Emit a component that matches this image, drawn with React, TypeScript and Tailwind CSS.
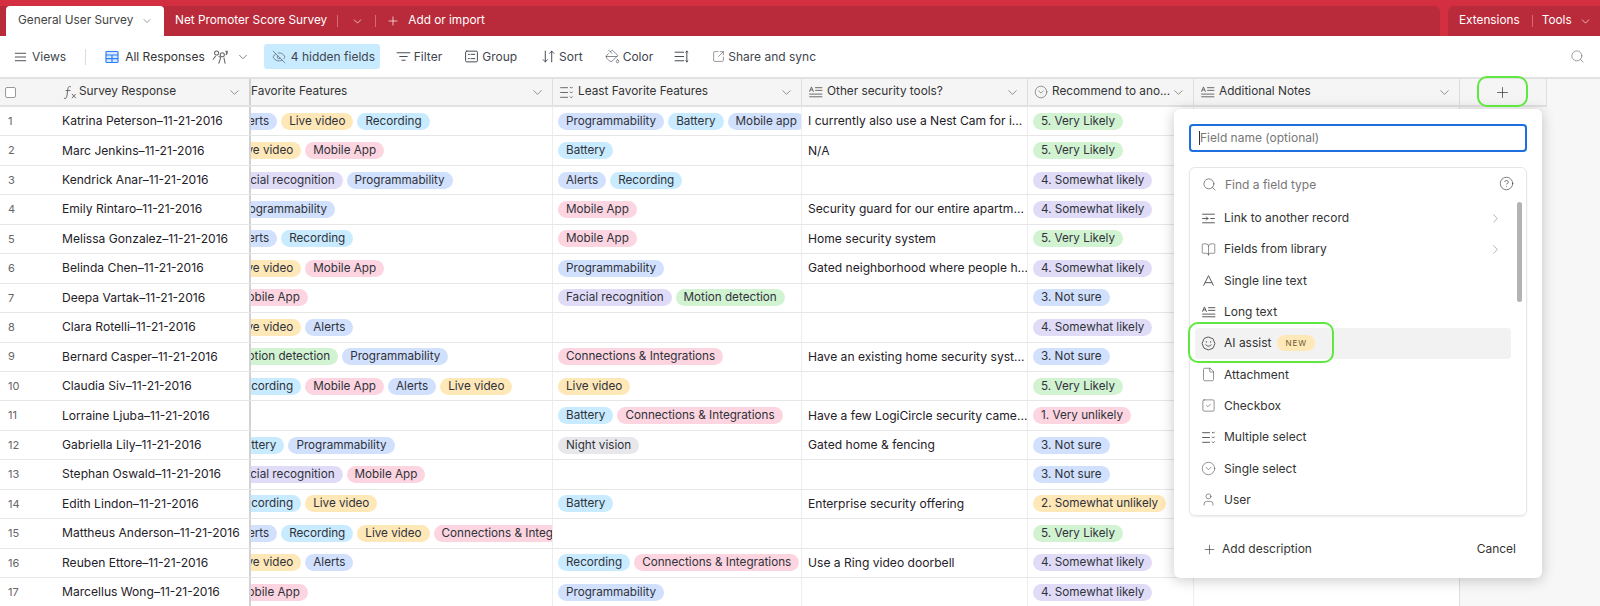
import React from "react";
import { ChevronDown, ChevronRight, Plus, Search, CircleHelp, User, BookOpen, File, SquareCheck, CircleChevronDown, EyeOff, PaintBucket, SquareArrowOutUpRight } from "lucide-react";

type P = { className?: string };
const Svg = ({ className, children, s = 15 }: P & { children: React.ReactNode; s?: number }) => (
  <svg width={s} height={s} viewBox="0 0 14 14" fill="none" stroke="currentColor" strokeWidth={0.9} strokeLinecap="round" strokeLinejoin="round" className={"shrink-0 " + (className ?? "")}>{children}</svg>
);
const LongText = ({ className }: P) => (
  <Svg className={className}>
    <path d="M1.5 6 L3.2 1.8 L5 6 M2.2 4.6 H4.3 M7 2.5 H13 M7 5 H13 M1.5 8.5 H13 M1.5 11 H13" />
  </Svg>
);
const MultiSel = ({ className }: P) => (
  <Svg className={className}>
    <path d="M1.5 2.5 H8 M1.5 7 H8 M1.5 11.5 H8 M10.5 2 L11.5 3 L12.5 2 M10.5 6.5 L11.5 7.5 L12.5 6.5 M10.5 11 L11.5 12 L12.5 11" />
  </Svg>
);
const Fx = ({ className }: P) => (
  <Svg className={className}>
    <path d="M7 1.5 C5.4 1 4.8 2 4.6 3.5 L3.6 10.5 C3.4 12.2 2.6 13 1.2 12.4 M2.8 5.2 H6.6 M8.6 8.6 L11.6 12 M11.6 8.6 L8.6 12" />
  </Svg>
);
const LinkIcon = ({ className }: P) => (
  <Svg className={className}>
    <path d="M1.5 3 H12.5 M1.5 11 H12.5 M1.5 7 H6.5 M5 5.5 L6.5 7 L5 8.5 M9 7 H12.5" />
  </Svg>
);
const TextA = ({ className }: P) => (
  <Svg className={className}><path d="M2.5 11.5 L7 2.5 L11.5 11.5 M4 9 H10" /></Svg>
);
const Bot = ({ className }: P) => (
  <Svg className={className}>
    <path d="M7 1 L11.2 2.6 L13 7 L11.2 11.4 L7 13 L2.8 11.4 L1 7 L2.8 2.6 Z" />
    <path d="M4.5 8.2 C5.5 10 8.5 10 9.5 8.2" />
    <path d="M5 5.2 V5.8 M9 5.2 V5.8" />
  </Svg>
);
const FilterIc = ({ className }: P) => (
  <Svg className={className}><path d="M1 3.5 H13 M3.5 7 H10.5 M5.5 10.5 H8.5" /></Svg>
);
const GroupIc = ({ className }: P) => (
  <Svg className={className}><rect x="1.5" y="2" width="11" height="10" rx="1" /><path d="M4 5 H5 M6.5 5 H10 M4 9 H5 M6.5 9 H10" /></Svg>
);
const SortIc = ({ className }: P) => (
  <Svg className={className}><path d="M4 2 V12 M2 10 L4 12 L6 10 M10 12 V2 M8 4 L10 2 L12 4" /></Svg>
);
const RowH = ({ className }: P) => (
  <Svg className={className}><path d="M1 3 H9 M1 7 H9 M1 11 H9 M12 2 V12 M11 3 L12 2 L13 3 M11 11 L12 12 L13 11" /></Svg>
);
const People = ({ className }: P) => (
  <Svg className={className} s={16}>
    <circle cx="4" cy="3.5" r="1.8" /><circle cx="9" cy="5" r="1.8" />
    <path d="M1 9 L3 6.5 M6 6.5 L7.5 7.5 M6 12.5 L7.5 8 M11.5 12.5 L10.5 8 M12 2 H13.5 L12.5 3.5 H13.6 L12.2 5" />
  </Svg>
);

const c = {
  blue: "bg-[#d0e0fd]",
  cyan: "bg-[#c8ebff]",
  yellow: "bg-[#ffe8b8]",
  pink: "bg-[#fcd5e0]",
  purple: "bg-[#e0dcf8]",
  green: "bg-[#d2f3d2]",
  gray: "bg-[#e8e8ec]",
};
const tagColor: Record<string, string> = {
  Alerts: c.blue,
  "Live video": c.yellow,
  Recording: c.cyan,
  "Mobile App": c.pink,
  "Mobile app": c.blue,
  "Facial recognition": c.purple,
  Programmability: c.blue,
  "Motion detection": c.green,
  Battery: c.cyan,
  "Connections & Integrations": c.pink,
  "Night vision": c.gray,
  "5. Very Likely": c.green,
  "4. Somewhat likely": c.purple,
  "3. Not sure": c.blue,
  "2. Somewhat unlikely": c.yellow,
  "1. Very unlikely": c.pink,
};

const rows: [string, string[], string[], string, string][] = [
  ["Katrina Peterson", ["Alerts", "Live video", "Recording"], ["Programmability", "Battery", "Mobile app"], "I currently also use a Nest Cam for i...", "5. Very Likely"],
  ["Marc Jenkins", ["Live video", "Mobile App"], ["Battery"], "N/A", "5. Very Likely"],
  ["Kendrick Anar", ["Facial recognition", "Programmability"], ["Alerts", "Recording"], "", "4. Somewhat likely"],
  ["Emily Rintaro", ["Programmability"], ["Mobile App"], "Security guard for our entire apartm...", "4. Somewhat likely"],
  ["Melissa Gonzalez", ["Alerts", "Recording"], ["Mobile App"], "Home security system", "5. Very Likely"],
  ["Belinda Chen", ["Live video", "Mobile App"], ["Programmability"], "Gated neighborhood where people h...", "4. Somewhat likely"],
  ["Deepa Vartak", ["Mobile App"], ["Facial recognition", "Motion detection"], "", "3. Not sure"],
  ["Clara Rotelli", ["Live video", "Alerts"], [], "", "4. Somewhat likely"],
  ["Bernard Casper", ["Motion detection", "Programmability"], ["Connections & Integrations"], "Have an existing home security syst...", "3. Not sure"],
  ["Claudia Siv", ["Recording", "Mobile App", "Alerts", "Live video"], ["Live video"], "", "5. Very Likely"],
  ["Lorraine Ljuba", [], ["Battery", "Connections & Integrations"], "Have a few LogiCircle security came...", "1. Very unlikely"],
  ["Gabriella Lily", ["Battery", "Programmability"], ["Night vision"], "Gated home & fencing", "3. Not sure"],
  ["Stephan Oswald", ["Facial recognition", "Mobile App"], [], "", "3. Not sure"],
  ["Edith Lindon", ["Recording", "Live video"], ["Battery"], "Enterprise security offering", "2. Somewhat unlikely"],
  ["Mattheus Anderson", ["Alerts", "Recording", "Live video", "Connections & Integrations"], [], "", "5. Very Likely"],
  ["Reuben Ettore", ["Live video", "Alerts"], ["Recording", "Connections & Integrations"], "Use a Ring video doorbell", "4. Somewhat likely"],
  ["Marcellus Wong", ["Mobile App"], ["Programmability"], "", "4. Somewhat likely"],
];

const Tag = ({ t }: { t: string }) => (
  <span className={"shrink-0 h-[17px] px-[8px] rounded-full flex items-center text-[11.7px] leading-[17px] text-[#30323a] whitespace-nowrap " + tagColor[t]}>{t}</span>
);

const HeaderCell = ({ w, icon, label }: { w: string; icon?: React.ReactNode; label: string }) => (
  <div className={"shrink-0 h-full flex items-center border-r border-[#dedede] text-[11.8px] text-[#333] overflow-hidden " + w}>
    <div className="flex items-center gap-[4px] flex-1 min-w-0 pl-[6px]">
      {icon}
      <span className="whitespace-nowrap">{label}</span>
    </div>
    <ChevronDown size={15} strokeWidth={1} className="shrink-0 text-[#555] mr-[7px]" />
  </div>
);

const ToolBtn = ({ icon, label, className }: { icon: React.ReactNode; label?: string; className?: string }) => (
  <div className={"flex items-center gap-[3px] text-[12px] text-[#41454d] " + (className ?? "")}>
    {icon}
    {label && <span className="whitespace-nowrap">{label}</span>}
  </div>
);

const FieldRow = ({ icon, label, arrow, active, badge }: { icon: React.ReactNode; label: string; arrow?: boolean; active?: boolean; badge?: boolean }) => (
  <div className={"h-[31.3px] shrink-0 flex items-center pl-[6px] pr-[8px] rounded-[4px] text-[12px] text-[#333] " + (active ? "bg-[#f2f2f2]" : "")}>
    <span className="w-[15px] flex justify-center text-[#555] mr-[8px]">{icon}</span>
    <span>{label}</span>
    {badge && <span className="ml-[6px] h-[16px] px-[8px] rounded-full bg-[#ffe8b8] text-[#6b5a30] text-[8px] tracking-[1px] flex items-center">NEW</span>}
    {arrow && <ChevronRight size={15} strokeWidth={1} className="ml-auto text-[#888]" />}
  </div>
);

export default function App() {
  return (
    <div className="relative w-[1600px] h-[606px] overflow-hidden bg-white font-['Inter','Liberation_Sans',sans-serif]">
      {/* tab bar */}
      <div className="h-[36px] pt-[6px] bg-[#d32f41] flex gap-[8px]">
        <div className="flex-1 bg-[#b92a3a] rounded-tr-[6px] flex items-end text-[11.8px] text-white">
          <div className="ml-[6px] w-[158px] h-[30px] bg-white rounded-t-[4px] flex items-center pl-[12px] text-[#444]">
            <span className="whitespace-nowrap">General User Survey</span>
            <ChevronDown size={12} strokeWidth={1.2} className="ml-[8px] text-[#555]" />
          </div>
          <div className="h-[30px] flex items-center">
            <span className="ml-[11px] whitespace-nowrap">Net Promoter Score Survey</span>
            <div className="ml-[10px] w-px h-[12px] bg-[#d46a76]" />
            <ChevronDown size={13} strokeWidth={1.2} className="ml-[13px]" />
            <div className="ml-[11px] w-px h-[12px] bg-[#d46a76]" />
            <Plus size={14} strokeWidth={1.2} className="ml-[10px]" />
            <span className="ml-[8px] whitespace-nowrap">Add or import</span>
          </div>
        </div>
        <div className="w-[152px] bg-[#b92a3a] rounded-tl-[6px] flex items-center text-[11.8px] text-white pl-[11px]">
          <span>Extensions</span>
          <div className="ml-[12px] w-px h-[12px] bg-[#d46a76]" />
          <span className="ml-[9px]">Tools</span>
          <ChevronDown size={13} strokeWidth={1.2} className="ml-[7px]" />
        </div>
      </div>

      {/* toolbar */}
      <div className="h-[41px] flex items-center pl-[14px] pr-[15px] bg-white">
        <ToolBtn icon={<svg width="13" height="14" viewBox="0 0 14 14" fill="none" stroke="currentColor"><path d="M1 3 H13 M1 7 H13 M1 11 H13" /></svg>} label="Views" className="text-[#333] gap-[5px]" />
        <div className="ml-[19px] w-px h-[16px] bg-[#ddd]" />
        <svg width="14" height="14" viewBox="0 0 14 14" fill="none" stroke="#2d7ff9" strokeWidth="1.2" className="ml-[19px] shrink-0">
          <rect x="1" y="1.5" width="12" height="11" rx="1" fill="#d8e8ff" />
          <path d="M1 5 H13 M1 8.7 H13 M7 5 V12.5" />
        </svg>
        <span className="ml-[6px] text-[12px] text-[#333] whitespace-nowrap">All Responses</span>
        <People className="ml-[7px] text-[#666]" />
        <ChevronDown size={14} strokeWidth={1} className="ml-[8px] text-[#333]" />
        <div className="ml-[14px] h-[25px] w-[116px] shrink-0 rounded-[3px] bg-[#c8ebff] flex items-center pl-[8px] gap-[5px] text-[12px] text-[#41454d]">
          <EyeOff size={14} strokeWidth={1} />
          <span className="whitespace-nowrap">4 hidden fields</span>
        </div>
        <ToolBtn className="ml-[16px]" icon={<FilterIc />} label="Filter" />
        <ToolBtn className="ml-[22px]" icon={<GroupIc />} label="Group" />
        <ToolBtn className="ml-[24px]" icon={<SortIc />} label="Sort" />
        <ToolBtn className="ml-[22px]" icon={<PaintBucket size={15} strokeWidth={1} />} label="Color" />
        <ToolBtn className="ml-[21px]" icon={<RowH />} />
        <ToolBtn className="ml-[23px]" icon={<SquareArrowOutUpRight size={13} strokeWidth={1} />} label="Share and sync" />
        <Search size={15} strokeWidth={1} className="ml-auto text-[#666]" />
      </div>

      {/* table */}
      <div className="flex h-[529px] border-t-2 border-[#e2e2e2] bg-[#f7f7f7]">
        <div className="w-[1547px] shrink-0">
          {/* header */}
          <div className="h-[28px] border-b-2 border-[#e2e2e2] bg-[#f5f5f5] flex">
            <div className="w-[251px] shrink-0 flex items-center border-r-2 border-[#d2d2d2] pl-[5px] text-[11.8px] text-[#333] h-full">
              <div className="w-[11px] h-[11px] rounded-[2px] border border-[#999] bg-white mr-[47px]" />
              <Fx className="text-[#666] mr-[1px]" />
              <span className="flex-1 whitespace-nowrap">Survey Response</span>
              <ChevronDown size={15} strokeWidth={1} className="text-[#555] mr-[7px]" />
            </div>
            <HeaderCell w="w-[302px] -indent-[6px]" label="Favorite Features" />
            <HeaderCell w="w-[249px]" icon={<MultiSel className="text-[#666]" />} label="Least Favorite Features" />
            <HeaderCell w="w-[226px]" icon={<LongText className="text-[#666]" />} label="Other security tools?" />
            <HeaderCell w="w-[166px]" icon={<CircleChevronDown size={14} strokeWidth={1} className="text-[#555] shrink-0" />} label="Recommend to ano..." />
            <HeaderCell w="w-[266px]" icon={<LongText className="text-[#666]" />} label="Additional Notes" />
            <div className="w-[87px] shrink-0 h-full flex items-center justify-center border-r border-[#dedede]">
              <Plus size={17} strokeWidth={1} className="text-[#333] -ml-[2px]" />
            </div>
          </div>
          {/* rows */}
          {rows.map((r, i) => (
            <div key={i} className="h-[29.44px] flex bg-white text-[12.1px] text-[#1f2128] border-b border-[#e6e6e6] w-[1460px]">
              <div className="w-[251px] shrink-0 flex items-center border-r-2 border-[#d2d2d2]">
                <span className="w-[62px] shrink-0 pl-[8px] text-[11px] text-[#666]">{i + 1}</span>
                <span className="whitespace-nowrap">{r[0]}–11-21-2016</span>
              </div>
              <div className="w-[302px] shrink-0 overflow-hidden border-r border-[#eeeeee] flex items-center">
                <div className="flex gap-[4px] -ml-[22px]">
                  {r[1].map((t) => <Tag key={t} t={t} />)}
                </div>
              </div>
              <div className="w-[249px] shrink-0 overflow-hidden border-r border-[#eeeeee] flex items-center pl-[5px]">
                <div className="flex gap-[4px]">
                  {r[2].map((t) => <Tag key={t} t={t} />)}
                </div>
              </div>
              <div className="w-[226px] shrink-0 border-r border-[#eeeeee] flex items-center pl-[6px] overflow-hidden">
                <span className="whitespace-nowrap">{r[3]}</span>
              </div>
              <div className="w-[166px] shrink-0 border-r border-[#eeeeee] flex items-center pl-[5px]">
                <Tag t={r[4]} />
              </div>
              <div className="w-[266px] shrink-0 border-r border-[#dedede]" />
            </div>
          ))}
        </div>
      </div>

      {/* popover */}
      <div className="absolute left-[1174px] top-[109px] w-[368px] h-[469px] rounded-[6px] bg-white shadow-[0_2px_14px_rgba(0,0,0,0.22)] flex flex-col px-[15px] pt-[15px]">
        <div className="h-[28px] rounded-[4px] border-2 border-[#1d6fe0] flex items-center pl-[8px] text-[12px] text-[#777]">
          <span className="w-px h-[14px] bg-[#333]" />
          <span>Field name (optional)</span>
        </div>
        <div className="mt-[15px] h-[349px] rounded-[6px] border border-[#e6e6e6] shadow-[0_1px_2px_rgba(0,0,0,0.08)] pt-[3px] pl-[5px] pr-[15px] relative overflow-hidden flex flex-col">
          <div className="h-[27px] shrink-0 flex items-center pl-[7px] text-[12px] text-[#777]">
            <Search size={15} strokeWidth={1} className="text-[#444] mr-[8px]" />
            <span>Find a field type</span>
          </div>
          <div className="h-[4.5px] shrink-0" />
          <FieldRow icon={<LinkIcon />} label="Link to another record" arrow />
          <FieldRow icon={<BookOpen size={15} strokeWidth={1} />} label="Fields from library" arrow />
          <FieldRow icon={<TextA />} label="Single line text" />
          <FieldRow icon={<LongText />} label="Long text" />
          <FieldRow icon={<Bot />} label="AI assist" active badge />
          <FieldRow icon={<File size={15} strokeWidth={1} />} label="Attachment" />
          <FieldRow icon={<SquareCheck size={15} strokeWidth={1} />} label="Checkbox" />
          <FieldRow icon={<MultiSel />} label="Multiple select" />
          <FieldRow icon={<CircleChevronDown size={15} strokeWidth={1} />} label="Single select" />
          <FieldRow icon={<User size={15} strokeWidth={1} />} label="User" />
          <CircleHelp size={15} strokeWidth={1} className="absolute right-[12px] top-[8px] text-[#333]" />
          <div className="absolute right-[4px] top-[34px] w-[5px] h-[100px] rounded-full bg-[#b3b3b3]" />
        </div>
        <div className="flex-1 flex items-center text-[12px] text-[#333] pl-[13px] pr-[11px] pt-[4px]">
          <Plus size={15} strokeWidth={1} className="mr-[5px]" />
          <span>Add description</span>
          <span className="ml-auto">Cancel</span>
        </div>
      </div>

      {/* green annotation outlines */}
      <div className="absolute left-[1477px] top-[76px] w-[51px] h-[31px] rounded-[10px] border-2 border-[#5fe83f]" />
      <div className="absolute left-[1188px] top-[322px] w-[146px] h-[41px] rounded-[10px] border-2 border-[#5fe83f]" />
    </div>
  );
}
